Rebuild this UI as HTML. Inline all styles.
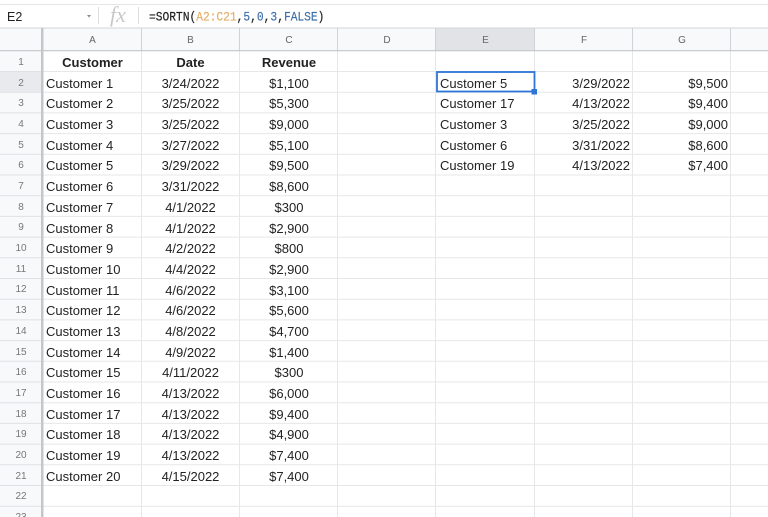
<!DOCTYPE html>
<html><head><meta charset="utf-8"><style>
html,body{margin:0;padding:0;background:#fff}
svg{display:block;filter:blur(.35px)}
text{font-family:"Liberation Sans",sans-serif;font-size:13px;fill:#222}
.h{font-size:10px;fill:#666;text-anchor:middle}
.r{font-size:10px;fill:#777;text-anchor:middle}
.c{text-anchor:middle}.e{text-anchor:end}
.b{font-weight:bold;text-anchor:middle}
.m{font-family:"Liberation Mono",monospace;font-size:12.5px;stroke-width:.2px}
.k{fill:#222;stroke:#222}.o{fill:#e3b06a;stroke:#e3b06a}.u{fill:#3f71ab;stroke:#3f71ab}
</style></head><body>
<svg width="768" height="517" viewBox="0 0 768 517" xmlns="http://www.w3.org/2000/svg">
<rect width="768" height="517" fill="#fff"/>
<path d="M0 4.5H768" stroke="#e6e6e6"/>
<text x="7" y="21" style="font-size:12.5px">E2</text>
<path d="M87 15h4l-2 2.500z" fill="#888"/>
<path d="M98.500 7V24M138.500 7V24" stroke="#ddd"/>
<text x="110" y="22" style="font-family:'Liberation Serif',serif;font-style:italic;font-size:22px;fill:#c8c8c8">fx</text>
<text transform="translate(149 20.700) scale(.9 1)" class="m"><tspan class="k">=SORTN(</tspan><tspan class="o">A2:C21</tspan><tspan class="k">,</tspan><tspan class="u">5</tspan><tspan class="k">,</tspan><tspan class="u">0</tspan><tspan class="k">,</tspan><tspan class="u">3</tspan><tspan class="k">,</tspan><tspan class="u">FALSE</tspan><tspan class="k">)</tspan></text>
<rect x="0" y="28" width="768" height="23" fill="#f8f9fa"/>
<rect x="0" y="51" width="43" height="466" fill="#f8f9fa"/>
<rect x="436" y="28" width="99" height="23" fill="#e1e3e6"/>
<rect x="0" y="71" width="43" height="21" fill="#e8eaed"/>
<path d="M43 71.500H768M43 92.200H768M43 112.900H768M43 133.600H768M43 154.300H768M43 175H768M43 195.700H768M43 216.400H768M43 237.100H768M43 257.800H768M43 278.500H768M43 299.200H768M43 319.900H768M43 340.600H768M43 361.300H768M43 382H768M43 402.700H768M43 423.400H768M43 444.100H768M43 464.800H768M43 485.500H768M43 506.200H768" stroke="#e6e7e9"/>
<path d="M0 71.500H43M0 92.200H43M0 112.900H43M0 133.600H43M0 154.300H43M0 175H43M0 195.700H43M0 216.400H43M0 237.100H43M0 257.800H43M0 278.500H43M0 299.200H43M0 319.900H43M0 340.600H43M0 361.300H43M0 382H43M0 402.700H43M0 423.400H43M0 444.100H43M0 464.800H43M0 485.500H43M0 506.200H43" stroke="#dfe1e4"/>
<path d="M141.500 51V517M239.500 51V517M337.500 51V517M435.500 51V517M534.500 51V517M632.500 51V517M730.500 51V517" stroke="#e6e7e9"/>
<path d="M141.500 28V51M239.500 28V51M337.500 28V51M435.500 28V51M534.500 28V51M632.500 28V51M730.500 28V51" stroke="#d0d2d5"/>
<path d="M0 28H768" stroke="#d4d5d8"/>
<path d="M0 50.700H768" stroke="#c4c6c9" stroke-width="1.200"/>
<rect x="41" y="28" width="2.500" height="489" fill="#c4c7ca"/>
<text class="h" x="92.500" y="43">A</text><text class="h" x="190.500" y="43">B</text><text class="h" x="289" y="43">C</text><text class="h" x="387" y="43">D</text><text class="h" x="485.500" y="43">E</text><text class="h" x="584" y="43">F</text><text class="h" x="682" y="43">G</text>
<text class="r" x="21" y="65">1</text><text class="r" x="21" y="86">2</text><text class="r" x="21" y="106">3</text><text class="r" x="21" y="127">4</text><text class="r" x="21" y="148">5</text><text class="r" x="21" y="168">6</text><text class="r" x="21" y="189">7</text><text class="r" x="21" y="210">8</text><text class="r" x="21" y="230">9</text><text class="r" x="21" y="251">10</text><text class="r" x="21" y="272">11</text><text class="r" x="21" y="292">12</text><text class="r" x="21" y="313">13</text><text class="r" x="21" y="334">14</text><text class="r" x="21" y="355">15</text><text class="r" x="21" y="375">16</text><text class="r" x="21" y="396">17</text><text class="r" x="21" y="417">18</text><text class="r" x="21" y="437">19</text><text class="r" x="21" y="458">20</text><text class="r" x="21" y="479">21</text><text class="r" x="21" y="499">22</text><text class="r" x="21" y="520">23</text>
<text class="b" x="92.500" y="67">Customer</text><text class="b" x="190.500" y="67">Date</text><text class="b" x="289" y="67">Revenue</text>
<text x="46" y="88">Customer 1</text><text class="c" x="190.500" y="88">3/24/2022</text><text class="c" x="289" y="88">$1,100</text>
<text x="46" y="108">Customer 2</text><text class="c" x="190.500" y="108">3/25/2022</text><text class="c" x="289" y="108">$5,300</text>
<text x="46" y="129">Customer 3</text><text class="c" x="190.500" y="129">3/25/2022</text><text class="c" x="289" y="129">$9,000</text>
<text x="46" y="150">Customer 4</text><text class="c" x="190.500" y="150">3/27/2022</text><text class="c" x="289" y="150">$5,100</text>
<text x="46" y="170">Customer 5</text><text class="c" x="190.500" y="170">3/29/2022</text><text class="c" x="289" y="170">$9,500</text>
<text x="46" y="191">Customer 6</text><text class="c" x="190.500" y="191">3/31/2022</text><text class="c" x="289" y="191">$8,600</text>
<text x="46" y="212">Customer 7</text><text class="c" x="190.500" y="212">4/1/2022</text><text class="c" x="289" y="212">$300</text>
<text x="46" y="233">Customer 8</text><text class="c" x="190.500" y="233">4/1/2022</text><text class="c" x="289" y="233">$2,900</text>
<text x="46" y="253">Customer 9</text><text class="c" x="190.500" y="253">4/2/2022</text><text class="c" x="289" y="253">$800</text>
<text x="46" y="274">Customer 10</text><text class="c" x="190.500" y="274">4/4/2022</text><text class="c" x="289" y="274">$2,900</text>
<text x="46" y="295">Customer 11</text><text class="c" x="190.500" y="295">4/6/2022</text><text class="c" x="289" y="295">$3,100</text>
<text x="46" y="315">Customer 12</text><text class="c" x="190.500" y="315">4/6/2022</text><text class="c" x="289" y="315">$5,600</text>
<text x="46" y="336">Customer 13</text><text class="c" x="190.500" y="336">4/8/2022</text><text class="c" x="289" y="336">$4,700</text>
<text x="46" y="357">Customer 14</text><text class="c" x="190.500" y="357">4/9/2022</text><text class="c" x="289" y="357">$1,400</text>
<text x="46" y="377">Customer 15</text><text class="c" x="190.500" y="377">4/11/2022</text><text class="c" x="289" y="377">$300</text>
<text x="46" y="398">Customer 16</text><text class="c" x="190.500" y="398">4/13/2022</text><text class="c" x="289" y="398">$6,000</text>
<text x="46" y="419">Customer 17</text><text class="c" x="190.500" y="419">4/13/2022</text><text class="c" x="289" y="419">$9,400</text>
<text x="46" y="439">Customer 18</text><text class="c" x="190.500" y="439">4/13/2022</text><text class="c" x="289" y="439">$4,900</text>
<text x="46" y="460">Customer 19</text><text class="c" x="190.500" y="460">4/13/2022</text><text class="c" x="289" y="460">$7,400</text>
<text x="46" y="481">Customer 20</text><text class="c" x="190.500" y="481">4/15/2022</text><text class="c" x="289" y="481">$7,400</text>
<text x="440" y="88">Customer 5</text><text class="e" x="630" y="88">3/29/2022</text><text class="e" x="728" y="88">$9,500</text>
<text x="440" y="108">Customer 17</text><text class="e" x="630" y="108">4/13/2022</text><text class="e" x="728" y="108">$9,400</text>
<text x="440" y="129">Customer 3</text><text class="e" x="630" y="129">3/25/2022</text><text class="e" x="728" y="129">$9,000</text>
<text x="440" y="150">Customer 6</text><text class="e" x="630" y="150">3/31/2022</text><text class="e" x="728" y="150">$8,600</text>
<text x="440" y="170">Customer 19</text><text class="e" x="630" y="170">4/13/2022</text><text class="e" x="728" y="170">$7,400</text>
<rect x="437" y="72" width="97.500" height="19.500" fill="none" stroke="#2f75d6" stroke-width="1.800"/>
<rect x="531.500" y="89" width="5.500" height="5.500" fill="#2f75d6"/>
</svg>
</body></html>
